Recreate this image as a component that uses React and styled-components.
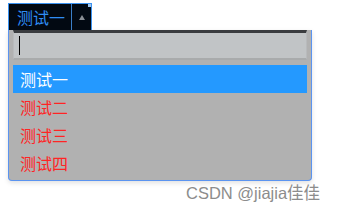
import React from "react";
import styled, { createGlobalStyle } from "styled-components";

const Global = createGlobalStyle`
  html, body { margin: 0; padding: 0; background: #ffffff; }
  body { font-family: "Noto Sans CJK SC", sans-serif; }
`;

const Page = styled.div`
  position: relative;
  width: 338px;
  height: 208px;
  padding: 3px 0 0 8px;
  box-sizing: border-box;
  display: flex;
  flex-direction: column;
  align-items: flex-start;
`;

const Select = styled.div`
  display: flex;
  width: 84px;
  height: 27px;
  box-sizing: border-box;
  background: #020912;
  border: 1px solid #3b92f0;
  border-bottom: none;
  position: relative;
`;

const SelectText = styled.div`
  flex: 1;
  display: flex;
  align-items: center;
  padding-left: 8px;
  font-family: "Noto Sans CJK SC", sans-serif;
  font-size: 16px;
  color: #2f8df5;
  line-height: 1;
`;

const ArrowBox = styled.div`
  width: 19px;
  border-left: 1px solid #3b7fc8;
  display: flex;
  align-items: center;
  justify-content: center;
`;

const Arrow = styled.div`
  width: 0;
  height: 0;
  border-left: 3px solid transparent;
  border-right: 3px solid transparent;
  border-bottom: 5px solid #8a8f95;
`;

const Corner = styled.div`
  position: absolute;
  right: 0;
  top: 0;
  width: 3px;
  height: 3px;
  background: #9fc6ef;
`;

const Panel = styled.div`
  width: 304px;
  height: 151px;
  box-sizing: border-box;
  background: #b1b1b1;
  border: 1px solid #5b94f0;
  border-top: none;
  border-radius: 0 0 4px 4px;
  padding: 0 4px 0 4px;
  box-shadow: 0 2px 5px rgba(0, 0, 0, 0.12);
  display: flex;
  flex-direction: column;
`;

const Search = styled.div`
  height: 30px;
  box-sizing: border-box;
  background: #c1c4c6;
  border-top: 3px solid #3a3c3f;
  border-bottom: 2px solid #a9abac;
  border-left: 1px solid #b8babc;
  border-right: 1px solid #b8babc;
  display: flex;
  align-items: center;
  padding-left: 5px;
`;

const Caret = styled.div`
  width: 1px;
  height: 19px;
  background: #000;
`;

const List = styled.div`
  margin-top: 5px;
  display: flex;
  flex-direction: column;
`;

const Item = styled.div`
  height: 28px;
  display: flex;
  align-items: center;
  padding-left: 7px;
  font-family: "Noto Sans CJK SC", sans-serif;
  font-size: 16px;
  color: ${(p) => (p.$active ? "#ffffff" : "#ff2424")};
  background: ${(p) => (p.$active ? "#2499ff" : "transparent")};
`;

const Watermark = styled.div`
  position: absolute;
  left: 186px;
  top: 180px;
  font-family: "Liberation Sans", "Noto Sans CJK SC", sans-serif;
  font-size: 16.5px;
  color: #8c8c8c;
  text-shadow: 0 0 1px rgba(255, 255, 255, 0.6);
  white-space: nowrap;
`;

const items = ["测试一", "测试二", "测试三", "测试四"];

export default function App() {
  return (
    <>
      <Global />
      <Page>
        <Select>
          <SelectText>测试一</SelectText>
          <ArrowBox>
            <Arrow />
          </ArrowBox>
          <Corner />
        </Select>
        <Panel>
          <Search>
            <Caret />
          </Search>
          <List>
            {items.map((t, i) => (
              <Item key={t} $active={i === 0}>
                {t}
              </Item>
            ))}
          </List>
        </Panel>
        <Watermark>CSDN @jiajia佳佳</Watermark>
      </Page>
    </>
  );
}
